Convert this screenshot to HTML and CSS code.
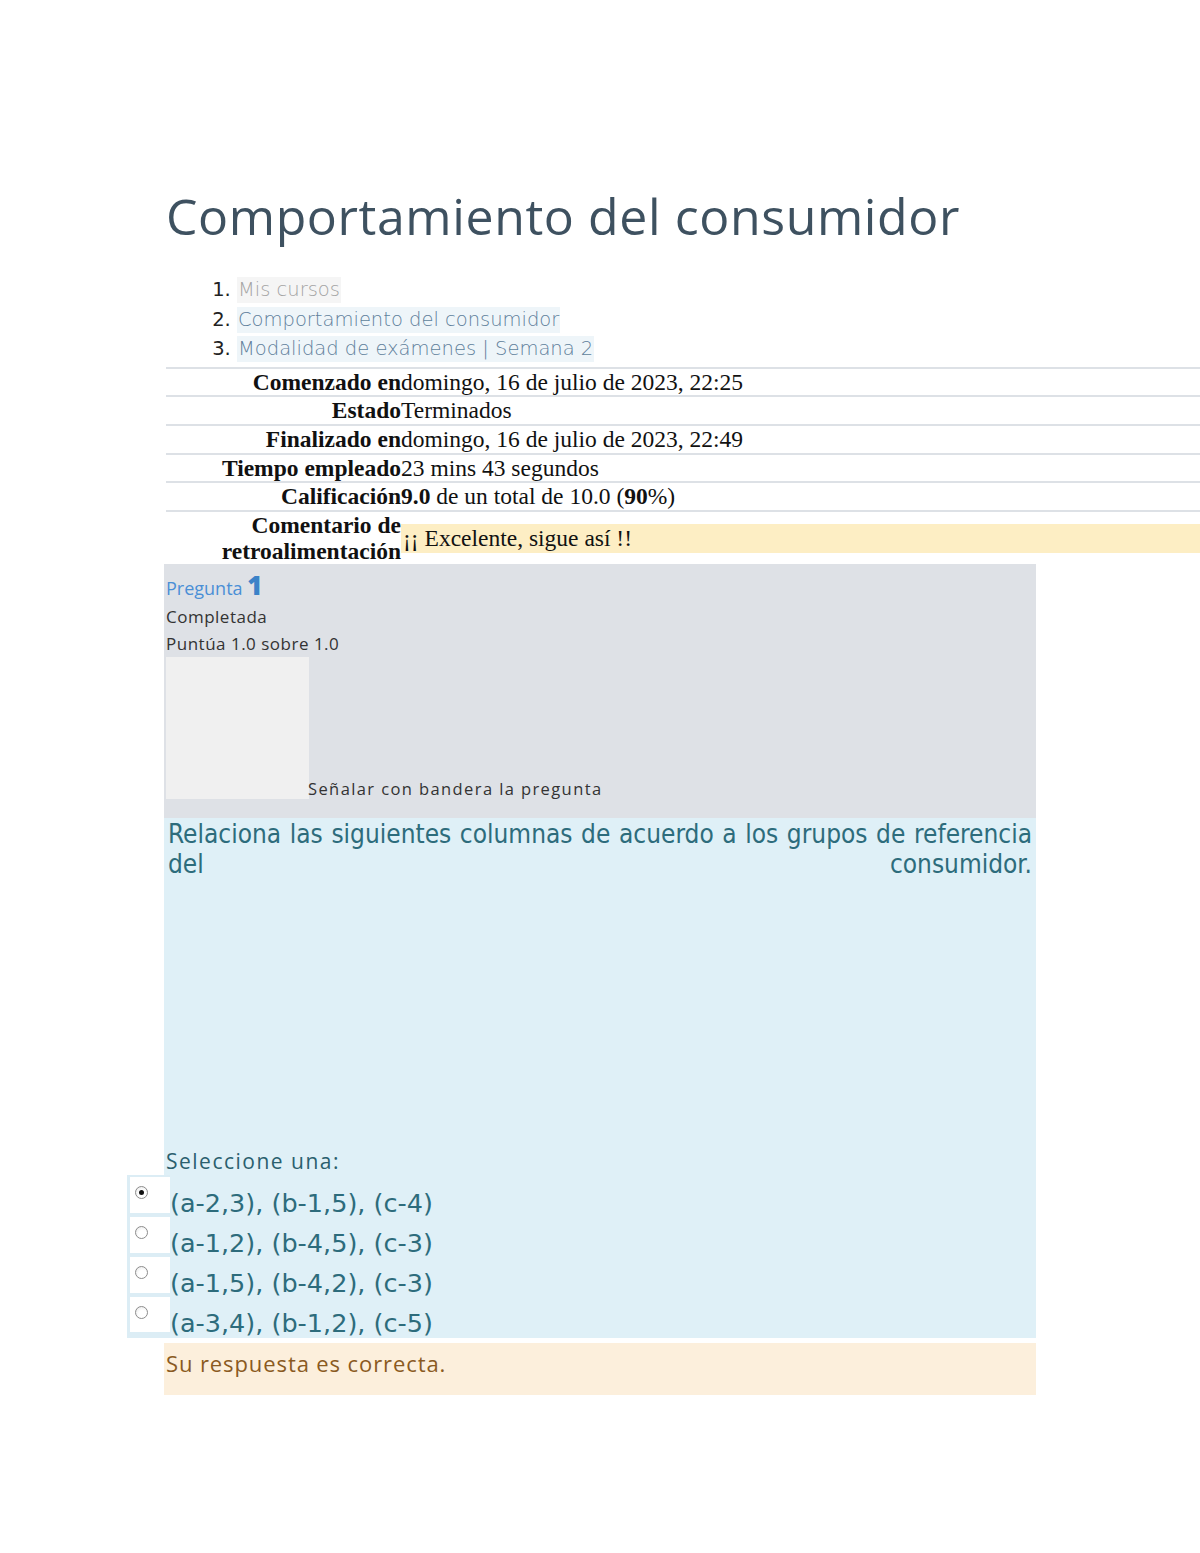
FILE: index.html
```html
<!DOCTYPE html>
<html lang="es">
<head>
<meta charset="utf-8">
<title>Comportamiento del consumidor</title>
<link rel="stylesheet" href="styles.css">
</head>
<body>
<main class="page">
  <h1 class="title">Comportamiento del consumidor</h1>
  <ol class="crumbs">
    <li><span class="crumb crumb-muted">Mis cursos</span></li>
    <li><span class="crumb">Comportamiento del consumidor</span></li>
    <li><span class="crumb">Modalidad de exámenes | Semana 2</span></li>
  </ol>

  <div class="summary">
    <div class="row"><div class="label">Comenzado en</div><div class="value">domingo, 16 de julio de 2023, 22:25</div></div>
    <div class="row"><div class="label">Estado</div><div class="value">Terminados</div></div>
    <div class="row"><div class="label">Finalizado en</div><div class="value">domingo, 16 de julio de 2023, 22:49</div></div>
    <div class="row"><div class="label">Tiempo empleado</div><div class="value">23 mins 43 segundos</div></div>
    <div class="row"><div class="label">Calificación</div><div class="value"><b>9.0</b> de un total de 10.0 (<b>90</b>%)</div></div>
    <div class="row row-comment"><div class="label">Comentario de retroalimentación</div><div class="value"><div class="feedback-note">¡¡ Excelente, sigue así !!</div></div></div>
  </div>

  <section class="qinfo">
    <div class="qno">Pregunta <span class="qnum">1</span></div>
    <div class="qstate">Completada</div>
    <div class="qstate">Puntúa 1.0 sobre 1.0</div>
    <div class="flagline">
      <div class="flagbox"></div>
      <span class="flagtext">Señalar con bandera la pregunta</span>
    </div>
  </section>

  <section class="qcontent">
    <p class="qtext">Relaciona las siguientes columnas de acuerdo a los grupos de referencia<br>del consumidor.</p>
    <div class="qimage"></div>
    <div class="prompt">Seleccione una:</div>
    <div class="answers">
      <div class="answer"><div class="cell"><span class="radio checked"></span></div><span class="atext">(a-2,3), (b-1,5), (c-4)</span></div>
      <div class="answer"><div class="cell"><span class="radio"></span></div><span class="atext">(a-1,2), (b-4,5), (c-3)</span></div>
      <div class="answer"><div class="cell"><span class="radio"></span></div><span class="atext">(a-1,5), (b-4,2), (c-3)</span></div>
      <div class="answer"><div class="cell"><span class="radio"></span></div><span class="atext">(a-3,4), (b-1,2), (c-5)</span></div>
    </div>
  </section>

  <section class="outcome">Su respuesta es correcta.</section>
</main>
</body>
</html>
```
FILE: styles.css
```css
html, body {
  margin: 0;
  padding: 0;
  background: #ffffff;
}

.page {
  padding: 0 0 158px 164px;
  font-family: "Open Sans", "DejaVu Sans", sans-serif;
}

.title {
  margin: 0;
  padding: 186px 0 0 2px;
  font-family: "Open Sans", sans-serif;
  font-weight: 400;
  font-size: 50px;
  line-height: 60px;
  color: #3e5160;
  letter-spacing: 0.6px;
}

.crumbs {
  margin: 29px 0 0 0;
  padding-left: 73px;
  font-family: "DejaVu Sans", sans-serif;
  font-size: 19.5px;
  line-height: 29.5px;
  color: #222;
}

.crumb {
  color: #5f7f9b;
  background: #eef5f9;
  padding: 1px 1px 2px;
  font-weight: 300;
}

.crumb-muted {
  color: #a3a3a3;
  background: #f5f5f5;
}

.summary {
  margin: 3px 0 0 2px;
  font-family: "Liberation Serif", "Times New Roman", serif;
  font-size: 23.5px;
  color: #111;
}

.row {
  display: grid;
  grid-template-columns: 235px 1fr;
  border-top: 2px solid #dde1e6;
  line-height: 26.7px;
}

.label {
  text-align: right;
  font-weight: 700;
}

.row-comment {
  align-items: center;
  line-height: 26px;
}

.feedback-note {
  background: #fdeec4;
  line-height: 29px;
  padding-left: 2px;
}

.qinfo {
  width: 872px;
  box-sizing: border-box;
  background: #dee1e6;
  padding: 6px 0 19px 2px;
  color: #333;
}

.qno {
  font-size: 18px;
  line-height: 30px;
  color: #4a8fd6;
}

.qnum {
  font-size: 26px;
  font-weight: 800;
  color: #3b82c8;
}

.qstate {
  font-size: 17px;
  letter-spacing: 0.5px;
  line-height: 27px;
  color: #333;
}

.flagline {
  display: flex;
  align-items: flex-end;
}

.flagbox {
  width: 143px;
  height: 142px;
  background: #f0f0f0;
}

.flagtext {
  font-size: 16.5px;
  letter-spacing: 1.4px;
  line-height: 20px;
  color: #333;
  margin-left: -1px;
}

.qcontent {
  width: 872px;
  box-sizing: border-box;
  background: #dff0f7;
  padding: 2px 4px 0 4px;
}

.qtext {
  margin: 0;
  font-family: "Liberation Sans Narrow", "DejaVu Sans Condensed", sans-serif;
  font-size: 26px;
  line-height: 29.5px;
  color: #2d6c7c;
  text-align: justify;
  text-align-last: justify;
}

.qimage {
  height: 268px;
}

.prompt {
  margin-left: -2px;
  font-size: 21px;
  letter-spacing: 1.5px;
  line-height: 28px;
  color: #2a5f6e;
}

.answers {
  margin-left: -41px;
}

.answer {
  display: flex;
  height: 40px;
}

.cell {
  box-sizing: border-box;
  width: 43px;
  height: 40px;
  flex: none;
  background: #ffffff;
  border: 2px solid #dcedf5;
  border-left-width: 3px;
  border-right: 0;
  padding: 9px 0 0 5px;
}

.answer:last-child {
  height: 43px;
}

.answer:last-child .cell {
  height: 43px;
  border-bottom-width: 6px;
}

.radio {
  display: block;
  box-sizing: border-box;
  width: 13px;
  height: 13px;
  border-radius: 50%;
  border: 1px solid #8c8c8c;
  background: radial-gradient(circle at 60% 65%, #ffffff 40%, #e4e4e4 100%);
  position: relative;
}

.radio.checked::after {
  content: "";
  position: absolute;
  left: 3px;
  top: 3px;
  width: 5px;
  height: 5px;
  border-radius: 50%;
  background: #111;
}

.atext {
  font-family: "DejaVu Sans", Verdana, sans-serif;
  font-size: 25.5px;
  line-height: 26px;
  padding-top: 15px;
  color: #2d6c7c;
}

.outcome {
  width: 872px;
  box-sizing: border-box;
  margin-top: 5px;
  height: 52px;
  background: #fcefdc;
  padding: 6px 2px 0;
  font-size: 22px;
  letter-spacing: 0.9px;
  line-height: 28px;
  color: #8a5a22;
}
```
